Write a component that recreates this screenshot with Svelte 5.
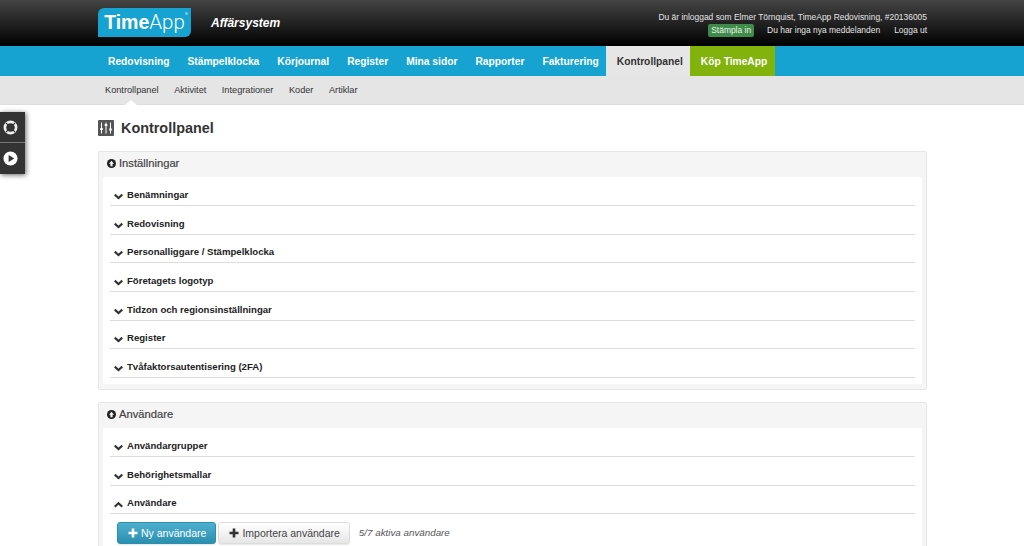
<script>
  const mainNav = ['Redovisning', 'Stämpelklocka', 'Körjournal', 'Register', 'Mina sidor', 'Rapporter', 'Fakturering'];
  const subNav = ['Kontrollpanel', 'Aktivitet', 'Integrationer', 'Koder', 'Artiklar'];
  const settings = [
    'Benämningar',
    'Redovisning',
    'Personalliggare / Stämpelklocka',
    'Företagets logotyp',
    'Tidzon och regionsinställningar',
    'Register',
    'Tvåfaktorsautentisering (2FA)'
  ];
  const users = ['Användargrupper', 'Behörighetsmallar'];
</script>

{#snippet chevron(up)}
  <svg class="chevron" viewBox="0 0 10 7" width="9" height="7">
    <path d={up ? 'M0.8 6 L5 2 L9.2 6' : 'M0.8 1.4 L5 5.2 L9.2 1.4'} fill="none" stroke="#333" stroke-width="2.3" />
  </svg>
{/snippet}

{#snippet circleUp()}
  <svg class="circle" viewBox="0 0 10 10" width="9" height="9">
    <circle cx="5" cy="5" r="5" fill="#222" />
    <path d="M5 2 L7.8 5.2 H6.2 V8 H3.8 V5.2 H2.2 Z" fill="#f5f5f5" />
  </svg>
{/snippet}

{#snippet plus(color)}
  <svg viewBox="0 0 10 10" width="10" height="10">
    <path d="M5 0.5 V9.5 M0.5 5 H9.5" stroke={color} stroke-width="2.6" fill="none" />
  </svg>
{/snippet}

<header class="top">
  <div class="top-inner">
    <div class="brand">
      <div class="logo"><b>Time</b><span>App</span><i></i></div>
      <span class="tagline">Affärsystem</span>
    </div>
    <div class="account">
      <div>Du är inloggad som Elmer Törnquist, TimeApp Redovisning, #20136005</div>
      <div class="account-row">
        <span class="stamp">Stämpla in</span>
        <span>Du har inga nya meddelanden</span>
        <span>Logga ut</span>
      </div>
    </div>
  </div>
</header>

<nav class="main-nav">
  {#each mainNav as item}
    <span class="item">{item}</span>
  {/each}
  <span class="item active">Kontrollpanel</span>
  <span class="item buy">Köp TimeApp</span>
</nav>

<nav class="sub-nav">
  {#each subNav as item, i}
    <span class:current={i === 0}>{item}</span>
  {/each}
</nav>

<div class="side-widget">
  <div class="side-btn">
    <svg viewBox="0 0 16 16" width="15" height="15">
      <circle cx="8" cy="8" r="6" fill="none" stroke="#eee" stroke-width="2.8" />
      <path d="M3.2 3.2 L5.8 5.8 M12.8 3.2 L10.2 5.8 M3.2 12.8 L5.8 10.2 M12.8 12.8 L10.2 10.2" stroke="#333" stroke-width="1.2" />
    </svg>
  </div>
  <div class="side-btn">
    <svg viewBox="0 0 16 16" width="15" height="15">
      <circle cx="8" cy="8" r="7.5" fill="#fff" />
      <path d="M6 4.2 L12 8 L6 11.8 Z" fill="#333" />
    </svg>
  </div>
</div>

<main class="content">
  <h1>
    <svg viewBox="0 0 16 16" width="16" height="16">
      <rect width="16" height="16" rx="1" fill="#555" />
      <path d="M3.5 2.5 V13.5 M8 2.5 V13.5 M12.5 2.5 V13.5" stroke="#fff" stroke-width="1" />
      <path d="M2.2 9 H4.8 M6.7 5 H9.3 M11.2 9.5 H13.8" stroke="#fff" stroke-width="1.8" />
    </svg>
    Kontrollpanel
  </h1>

  <section class="panel">
    <h2>{@render circleUp()}Inställningar</h2>
    <div class="panel-body">
      {#each settings as row}
        <div class="row">{@render chevron(false)}<span>{row}</span></div>
      {/each}
    </div>
  </section>

  <section class="panel">
    <h2>{@render circleUp()}Användare</h2>
    <div class="panel-body">
      {#each users as row}
        <div class="row">{@render chevron(false)}<span>{row}</span></div>
      {/each}
      <div class="row">{@render chevron(true)}<span>Användare</span></div>
      <div class="actions">
        <button class="btn primary">{@render plus('#fff')}Ny användare</button>
        <button class="btn">{@render plus('#333')}Importera användare</button>
        <em>5/7 aktiva användare</em>
      </div>
    </div>
  </section>
</main>

<style>
  :global(body) {
    margin: 0;
    background: #fff;
    font-family: "Liberation Sans", Arial, sans-serif;
    color: #333;
    height: 546px;
    overflow: hidden;
  }

  .top {
    height: 46px;
    background: linear-gradient(to bottom, #444 0%, #000 100%);
  }

  .top-inner {
    width: 829px;
    margin-left: 98px;
    height: 100%;
    display: flex;
    justify-content: space-between;
  }

  .brand {
    display: flex;
    align-items: center;
    gap: 20px;
  }

  .logo {
    position: relative;
    width: 93px;
    height: 29px;
    margin-top: -1px;
    background: #17a3d1;
    border-radius: 6px 0 6px 0;
    color: #fff;
    font-size: 19.5px;
    line-height: 29px;
    text-align: center;
  }

  .logo span {
    font-family: Roboto, "Liberation Sans", sans-serif;
    font-weight: 300;
    font-size: 20.5px;
  }

  .logo i {
    position: absolute;
    top: 4px;
    right: 3px;
    width: 3px;
    height: 3px;
    border-radius: 50%;
    background: #7ccbe6;
  }

  .tagline {
    color: #fff;
    font-size: 12px;
    font-weight: bold;
    font-style: italic;
  }

  .account {
    padding-top: 10.5px;
    text-align: right;
    font-size: 8.45px;
    color: #e4e4e4;
    line-height: 13px;
  }

  .account-row {
    display: flex;
    justify-content: flex-end;
    align-items: center;
    gap: 14px;
  }

  .stamp {
    background: #3f8b49;
    border-radius: 2px;
    padding: 0 3px;
    margin-right: -1px;
    color: #e8f2e8;
  }

  .main-nav {
    height: 30px;
    background: #17a3d1;
    display: flex;
    padding-left: 99px;
  }

  .item {
    padding: 0 9px;
    line-height: 31px;
    font-size: 10.25px;
    font-weight: bold;
    color: #fff;
  }

  .item:nth-child(7) {
    padding-right: 7px;
  }

  .item.active {
    background: #e6e6e6;
    color: #333;
    padding: 0 7px 0 10px;
    border-left: 1px solid #d0e8f0;
  }

  .item.buy {
    background: #82b30c;
    padding: 0 8px 0 11px;
  }

  .sub-nav {
    height: 28px;
    background: #e5e5e5;
    border-bottom: 1px solid #ddd;
    padding-left: 105px;
    display: flex;
    gap: 15.5px;
    font-size: 9.2px;
    line-height: 28px;
    color: #333;
  }

  .current {
    position: relative;
  }

  .current::after {
    content: '';
    position: absolute;
    left: 20px;
    bottom: -1px;
    border: 6px solid transparent;
    border-top: 0;
    border-bottom: 5px solid #fff;
  }

  .side-widget {
    position: absolute;
    left: 0;
    top: 112px;
    width: 25px;
    background: #333;
    box-shadow: 1px 1px 5px rgba(0, 0, 0, 0.6);
  }

  .side-btn {
    height: 30px;
    display: flex;
    align-items: center;
    padding-left: 3px;
  }

  .side-btn + .side-btn {
    border-top: 1px solid #777;
    height: 31px;
  }

  .content {
    width: 829px;
    margin-left: 98px;
  }

  h1 {
    margin: 0;
    height: 46px;
    display: flex;
    align-items: center;
    gap: 7px;
    font-size: 14.4px;
    font-weight: bold;
    color: #333;
  }

  .panel {
    background: #f5f5f5;
    border: 1px solid #e6e6e6;
    border-radius: 2px;
    padding: 0 4px 5px;
    margin-bottom: 12px;
  }

  h2 {
    margin: 0;
    height: 25px;
    padding-bottom: 3px;
    box-sizing: border-box;
    display: flex;
    align-items: center;
    gap: 3px;
    padding-left: 4px;
    font-size: 11.2px;
    font-weight: normal;
    -webkit-text-stroke: 0.2px #444;
    color: #444;
  }

  .panel-body {
    background: #fff;
    border-radius: 2px;
    padding: 0.3px 7px 6px;
  }

  .row {
    height: 25.7px;
    padding-bottom: 2px;
    border-bottom: 1px solid #ddd;
    box-sizing: content-box;
    display: flex;
    align-items: flex-end;
    gap: 4px;
    padding-left: 4px;
    font-size: 9.6px;
    line-height: 16px;
    font-weight: bold;
    color: #222;
  }

  .row .chevron {
    margin-bottom: 3px;
  }

  .actions {
    display: flex;
    align-items: center;
    gap: 2px;
    padding: 7.5px 7px 0;
  }

  .btn {
    height: 22px;
    display: flex;
    align-items: center;
    gap: 3px;
    padding: 0 9px 0 10px;
    border: 1px solid #ddd;
    border-radius: 3px;
    background: linear-gradient(to bottom, #fff, #e6e6e6);
    box-shadow: 0 1px 1px rgba(0, 0, 0, 0.1);
    color: #444;
    font-family: inherit;
    font-size: 10.5px;
  }

  .btn.primary {
    background: linear-gradient(to bottom, #4eb0d0, #2b8fb0);
    border-color: #2b8fb0;
    color: #fff;
  }

  em {
    margin-left: 7px;
    font-size: 9.8px;
    color: #555;
  }
</style>
